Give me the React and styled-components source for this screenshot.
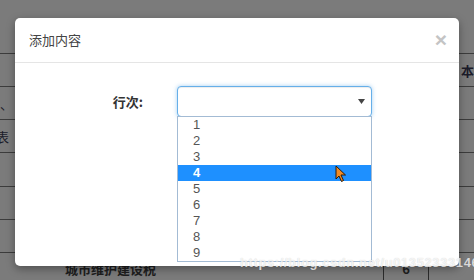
import styled, { createGlobalStyle } from 'styled-components';

const GlobalStyle = createGlobalStyle`
  html, body {
    margin: 0;
    padding: 0;
  }
  body {
    font-family: 'Liberation Sans', 'Noto Sans CJK SC', sans-serif;
  }
`;

const Page = styled.div`
  position: relative;
  width: 474px;
  height: 280px;
  overflow: hidden;
  background: #7b7b7b;
`;

const Table = styled.div`
  display: flex;
  flex-direction: column;
`;

const Row = styled.div`
  height: ${(p) => p.$h}px;
  border-bottom: 1px solid #3c3c3c;
  box-sizing: border-box;
  display: flex;
  align-items: center;
  font-family: 'Noto Sans CJK SC', sans-serif;
  font-size: 13px;
  color: #1c1c2a;
  overflow: hidden;
  white-space: nowrap;
`;

const EdgeCell = styled.div`
  width: ${(p) => p.$w}px;
  flex: none;
  display: flex;
  justify-content: flex-end;
  overflow: hidden;
`;

const RightText = styled.div`
  margin-left: auto;
  width: 13px;
  overflow: hidden;
  font-weight: 700;
`;

const BottomRow = styled.div`
  height: 27px;
  display: grid;
  grid-template-columns: 1fr 45px 46px;
  font-family: 'Noto Sans CJK SC', sans-serif;
  font-size: 13px;
  color: #1e1e1e;
`;

const Cell = styled.div`
  display: flex;
  align-items: center;
  justify-content: ${(p) => (p.$center ? 'center' : 'flex-start')};
  padding-left: ${(p) => p.$pad || 0}px;
  padding-top: 4px;
  border-left: ${(p) => (p.$line ? '1px solid #2c2c2c' : 'none')};
  font-weight: 700;
`;

const Modal = styled.div`
  position: absolute;
  left: 15px;
  top: 18px;
  width: 444px;
  height: 248px;
  background: #fff;
  border-radius: 5px;
  box-shadow: 0 3px 9px rgba(0, 0, 0, 0.35);
  display: flex;
  flex-direction: column;
`;

const Header = styled.div`
  height: 45px;
  box-sizing: border-box;
  border-bottom: 1px solid #e5e5e5;
  display: flex;
  align-items: center;
  justify-content: space-between;
  padding: 0 12px 2px 14px;
`;

const Title = styled.h4`
  margin: 0;
  font-family: 'Noto Sans CJK SC', sans-serif;
  font-weight: 400;
  font-size: 13px;
  color: #444;
`;

const Close = styled.span`
  font-family: 'Liberation Sans', sans-serif;
  font-size: 21px;
  font-weight: 700;
  color: #c4c4c4;
  line-height: 1;
`;

const Body = styled.div`
  padding: 23px 0 0 0;
  display: flex;
  align-items: center;
`;

const Label = styled.label`
  width: 128px;
  text-align: right;
  font-family: 'Noto Sans CJK SC', sans-serif;
  font-weight: 700;
  font-size: 13px;
  color: #333;
  margin-right: 34px;
`;

const SelectWrap = styled.div`
  position: relative;
  width: 195px;
`;

const SelectBox = styled.div`
  height: 31px;
  box-sizing: border-box;
  border: 1px solid #66afe9;
  border-radius: 4px;
  box-shadow: inset 0 1px 1px rgba(0, 0, 0, 0.075), 0 0 4px rgba(102, 175, 233, 0.6);
  display: flex;
  align-items: center;
  justify-content: flex-end;
  padding-right: 6px;
  background: #fff;
`;

const List = styled.ul`
  position: absolute;
  left: 0;
  top: 30px;
  width: 195px;
  margin: 0;
  padding: 0;
  list-style: none;
  box-sizing: border-box;
  border: 1px solid #a3bbd4;
  background: #fff;
`;

const Item = styled.li`
  height: 16px;
  line-height: 16px;
  padding-left: 15px;
  font-family: 'Liberation Sans', sans-serif;
  font-size: 13px;
  color: ${(p) => (p.$active ? '#fff' : '#555')};
  background: ${(p) => (p.$active ? '#1e90ff' : 'transparent')};
  font-weight: ${(p) => (p.$active ? 700 : 400)};
`;

const Cursor = styled.svg`
  position: absolute;
  left: 335px;
  top: 165px;
`;

const Watermark = styled.div`
  position: absolute;
  left: 240px;
  top: 255px;
  font-family: 'Liberation Sans', sans-serif;
  font-weight: 700;
  font-size: 13px;
  letter-spacing: 0.6px;
  color: rgba(255, 255, 255, 0.75);
  text-shadow: 0 0 1px rgba(0, 0, 0, 0.2);
  white-space: nowrap;
`;

const rows = [
  { h: 54 },
  { h: 33, right: '本期' },
  { h: 33, left: '、' },
  { h: 33, left: '说明表' },
  { h: 34 },
  { h: 33 },
  { h: 33 },
];

export default function App() {
  const options = [1, 2, 3, 4, 5, 6, 7, 8, 9];
  return (
    <>
      <GlobalStyle />
      <Page>
        <Table>
          {rows.map((r, i) => (
            <Row key={i} $h={r.h}>
              {r.left && <EdgeCell $w={r.left === '、' ? 13 : 9}>{r.left}</EdgeCell>}
              {r.right && <RightText>{r.right}</RightText>}
            </Row>
          ))}
          <BottomRow>
            <Cell $pad={65}>城市维护建设税</Cell>
            <Cell $line $center>6</Cell>
            <Cell $line />
          </BottomRow>
        </Table>

        <Modal>
          <Header>
            <Title>添加内容</Title>
            <Close>×</Close>
          </Header>
          <Body>
            <Label>行次:</Label>
            <SelectWrap>
              <SelectBox>
                <svg width="7" height="5" viewBox="0 0 7 5">
                  <path d="M0 0 L7 0 L3.5 5 Z" fill="#444" />
                </svg>
              </SelectBox>
              <List>
                {options.map((n) => (
                  <Item key={n} $active={n === 4}>
                    {n}
                  </Item>
                ))}
              </List>
            </SelectWrap>
          </Body>
        </Modal>

        <Watermark>https://blog.csdn.net/u013523331461</Watermark>

        <Cursor width="12" height="18" viewBox="0 0 12 18">
          <path
            d="M1 1 L1 14 L4 11 L6.5 16.5 L8.5 15.5 L6 10 L10.5 10 Z"
            fill="#f08a24"
            stroke="#2a1a0a"
            strokeWidth="1"
            strokeLinejoin="round"
          />
        </Cursor>
      </Page>
    </>
  );
}
